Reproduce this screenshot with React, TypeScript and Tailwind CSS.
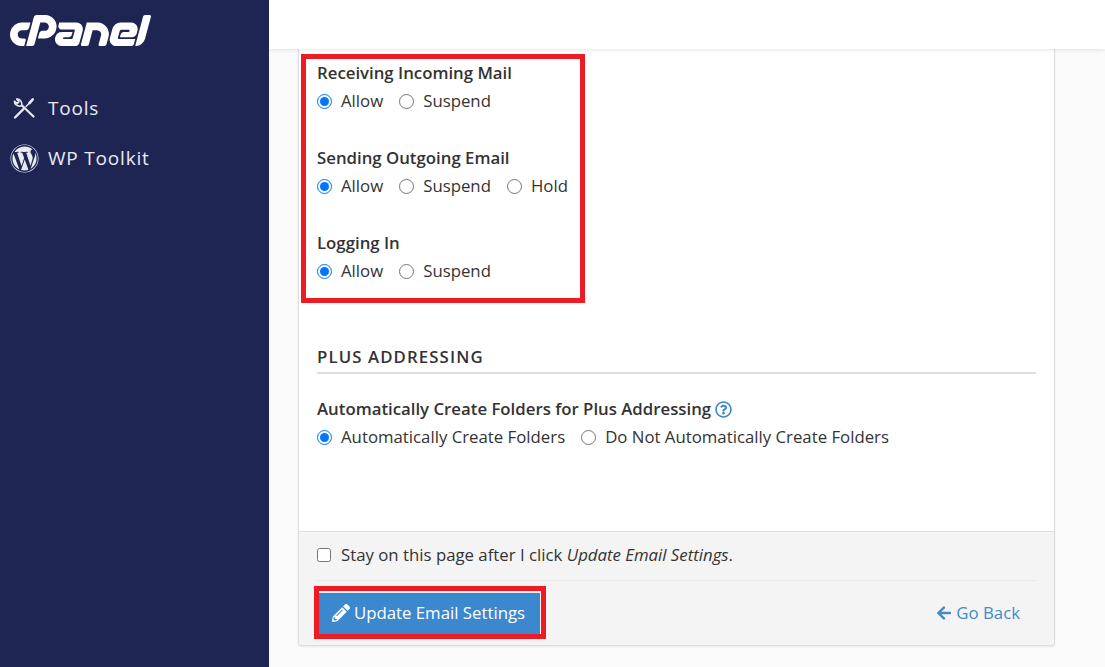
import { FaWordpress, FaPencilAlt, FaArrowLeft, FaRegQuestionCircle } from "react-icons/fa";
import { SiCpanel } from "react-icons/si";

function ToolsIcon() {
  return (
    <svg width="24" height="24" viewBox="0 0 24 24" fill="none" stroke="currentColor" strokeLinecap="round" strokeLinejoin="round">
      <path d="M3 21.5 11.5 13" strokeWidth="2.4" />
      <path d="M14 10.5 17.5 7" strokeWidth="1.4" />
      <path d="M17.5 7 20.8 3.4" strokeWidth="2.6" />
      <path d="M21.5 20.5 10 9.5" strokeWidth="2.2" />
      <path d="M9.6 9.8C10.6 6 8.2 2.6 4.6 3L7 5.8 5.4 7.6 2.4 5.2C2 8.6 5.8 11 9.6 9.8Z" strokeWidth="1.5" />
    </svg>
  );
}

function Radio({ label, checked, group }: { label: string; checked?: boolean; group: string }) {
  return (
    <label className="flex items-center gap-[9px]">
      <input type="radio" name={group} defaultChecked={checked} className="m-0 h-[15px] w-[15px] accent-[#0075ff]" />
      <span>{label}</span>
    </label>
  );
}

function Field({ title, group, options }: { title: string; group: string; options: string[] }) {
  return (
    <div className="h-[85px]">
      <div className="h-[28px] font-semibold leading-[28px]">{title}</div>
      <div className="flex h-[28px] items-center gap-4">
        {options.map((option, i) => (
          <Radio key={option} label={option} group={group} checked={i === 0} />
        ))}
      </div>
    </div>
  );
}

export default function App() {
  return (
    <div className="flex h-[667px] overflow-hidden bg-[#fafafa] font-['Open_Sans',sans-serif] text-[16.8px] text-[#333333]">
      <aside className="w-[269px] shrink-0 bg-[#1f2553] text-[#e8eaf2]">
        <div className="flex h-[83px] items-start pl-[10px]">
          <SiCpanel className="mt-[-40px] h-[141px] w-[141px] shrink-0 text-white" />
        </div>
        <nav className="text-[19px] tracking-[0.8px]">
          <div className="flex h-[50px] items-center gap-[12px] pl-[12px]">
            <ToolsIcon />
            <span>Tools</span>
          </div>
          <div className="flex h-[50px] items-center gap-[9px] pl-[10px]">
            <FaWordpress className="h-[29px] w-[29px]" />
            <span>WP Toolkit</span>
          </div>
        </nav>
      </aside>

      <div className="flex min-w-0 flex-1 flex-col">
        <header className="relative z-10 h-[49px] shrink-0 bg-white shadow-[0_1px_4px_rgba(0,0,0,0.1)]" />
        <main className="pl-[29px] pr-[50px]">
          <section className="h-[597px] rounded-b border border-t-0 border-[#dddddd] bg-white shadow-[0_1px_2px_rgba(0,0,0,0.08)]">
            <div className="flex h-[482px] flex-col">
              <div className="ml-[2px] mt-[5px] h-[249px] w-[284px] border-[5px] border-[#ed1c24] pl-[11px]">
                <Field title="Receiving Incoming Mail" group="incoming" options={["Allow", "Suspend"]} />
                <Field title="Sending Outgoing Email" group="outgoing" options={["Allow", "Suspend", "Hold"]} />
                <Field title="Logging In" group="login" options={["Allow", "Suspend"]} />
              </div>

              <div className="mx-[18px] mt-[42px] border-b-2 border-[#dddddd] pb-[3px] font-semibold uppercase leading-[24px] tracking-[1.1px]">
                Plus Addressing
              </div>

              <div className="ml-[18px] mt-[21px] flex h-[28px] items-center gap-[4px] font-semibold">
                Automatically Create Folders for Plus Addressing
                <FaRegQuestionCircle className="h-[17px] w-[17px] text-[#3d87c9]" />
              </div>
              <div className="ml-[18px] flex h-[28px] items-center gap-4">
                <Radio label="Automatically Create Folders" group="plus" checked />
                <Radio label="Do Not Automatically Create Folders" group="plus" />
              </div>
            </div>

            <div className="h-[114px] rounded-b border-t border-[#dddddd] bg-[#f4f4f4] px-[18px]">
              <label className="flex h-[49px] items-center gap-[10px] border-b border-[#e8e8e8] pb-[2px]">
                <input type="checkbox" className="m-0 h-[14px] w-[14px]" />
                <span>
                  Stay on this page after I click <em>Update Email Settings</em>.
                </span>
              </label>
              <div className="flex items-center justify-between">
                <div className="ml-[-3px] mt-[5px] border-[5px] border-[#ed1c24] pr-[1px] pt-[2px]">
                  <button className="flex h-[41px] w-[221px] items-center justify-center gap-[4px] bg-[#3b88cf] pb-[2px] pr-[2px] text-white">
                    <FaPencilAlt className="h-[18px] w-[18px]" />
                    Update Email Settings
                  </button>
                </div>
                <a className="mr-[16px] mt-[6px] flex items-center gap-[4px] text-[#428bca]">
                  <FaArrowLeft className="h-[16px] w-[16px]" />
                  Go Back
                </a>
              </div>
            </div>
          </section>
        </main>
      </div>
    </div>
  );
}
